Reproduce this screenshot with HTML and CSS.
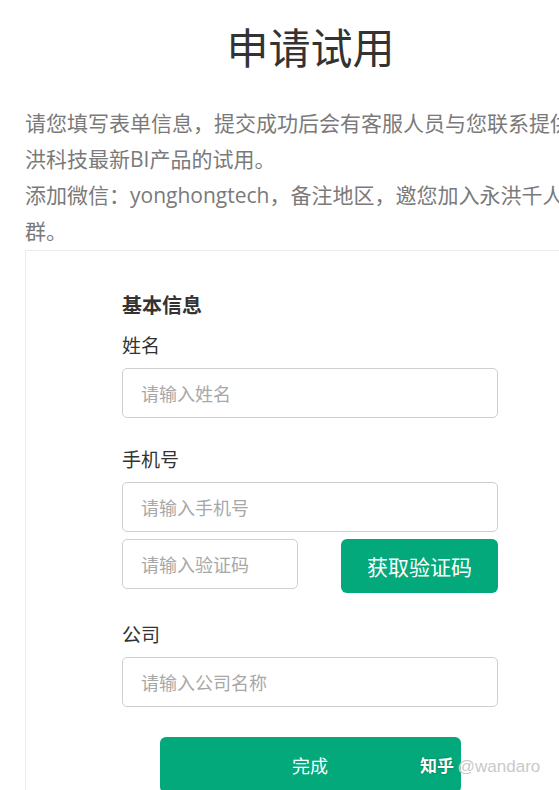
FILE: index.html
```html
<!DOCTYPE html>
<html lang="zh-CN">
<head>
<meta charset="utf-8">
<title>申请试用</title>
<link rel="stylesheet" href="styles.css">
</head>
<body>
<div class="page">
  <h1 class="title">申请试用</h1>
  <div class="intro">
    <p>请您填写表单信息，提交成功后会有客服人员与您联系提供永洪科技最新BI产品的试用。</p>
    <p>添加微信：yonghongtech，备注地区，邀您加入永洪千人社群。</p>
  </div>
  <div class="card">
    <form class="form">
      <div class="section-title">基本信息</div>
      <div class="field">
        <label class="label">姓名</label>
        <input class="input" type="text" placeholder="请输入姓名">
      </div>
      <div class="field">
        <label class="label">手机号</label>
        <input class="input" type="text" placeholder="请输入手机号">
        <div class="code-row">
          <input class="input code-input" type="text" placeholder="请输入验证码">
          <button type="button" class="code-btn">获取验证码</button>
        </div>
      </div>
      <div class="field last">
        <label class="label">公司</label>
        <input class="input" type="text" placeholder="请输入公司名称">
      </div>
      <button type="button" class="submit">完成</button>
    </form>
  </div>
</div>
<div class="watermark"><span class="wm-zh">知乎</span> <span class="wm-user">@wandaro</span></div>
</body>
</html>
```
FILE: styles.css
```css
html, body {
  margin: 0;
  padding: 0;
  overflow: hidden;
  background: #ffffff;
}
body {
  font-family: "Open Sans", "Noto Sans CJK SC", sans-serif;
  color: #333333;
}
.page {
  width: 573px;
  padding-left: 25px;
}
.title {
  width: 571px;
  margin: 0;
  padding-top: 18px;
  font-size: 42px;
  line-height: 56px;
  font-weight: normal;
  text-align: center;
  color: #333333;
  font-family: "Noto Sans CJK SC", sans-serif;
}
.intro {
  margin-top: 31px;
  font-size: 21px;
  line-height: 36px;
  color: #7a7a7a;
}
.intro p {
  margin: 0;
}
.card {
  width: 570px;
  box-sizing: border-box;
  margin-top: 1px;
  border: 1px solid #ececec;
  padding: 39px 0 40px;
  display: flex;
  justify-content: center;
}
.form {
  width: 376px;
  display: flex;
  flex-direction: column;
  font-family: "Noto Sans CJK SC", sans-serif;
}
.section-title {
  font-size: 20px;
  line-height: 30px;
  font-weight: bold;
  color: #333333;
  margin-bottom: 10px;
}
.field {
  display: flex;
  flex-direction: column;
  margin-bottom: 26px;
}
.field.last {
  margin-bottom: 0;
}
.label {
  font-size: 19px;
  line-height: 30px;
  color: #333333;
  margin-bottom: 8px;
}
.input {
  box-sizing: border-box;
  width: 100%;
  height: 50px;
  border: 1px solid #cfcfcf;
  border-radius: 5px;
  padding: 0 18px;
  font-size: 18px;
  font-family: "Noto Sans CJK SC", sans-serif;
  color: #333333;
  background: #ffffff;
  outline: none;
}
.input::placeholder {
  color: #a8a8a8;
}
.code-row {
  display: flex;
  justify-content: space-between;
  align-items: flex-start;
  margin-top: 7px;
}
.code-input {
  width: 176px;
}
.code-btn {
  width: 157px;
  height: 54px;
  border: none;
  border-radius: 6px;
  background: #03a97b;
  color: #ffffff;
  font-size: 21px;
  font-family: "Noto Sans CJK SC", sans-serif;
  padding: 0;
}
.submit {
  align-self: center;
  width: 301px;
  height: 56px;
  margin-top: 30px;
  border: none;
  border-radius: 6px;
  background: #03a97b;
  color: #ffffff;
  font-size: 18px;
  font-family: "Noto Sans CJK SC", sans-serif;
  padding: 0;
}
.watermark {
  position: absolute;
  left: 420px;
  top: 753px;
  font-size: 17px;
  line-height: 24px;
  white-space: nowrap;
  font-family: "Noto Sans CJK SC", sans-serif;
}
.wm-zh {
  color: #ffffff;
  font-weight: bold;
  text-shadow: 0 0 2px rgba(0, 0, 0, 0.45);
}
.wm-user {
  color: #c9c9c9;
  font-family: "Liberation Sans", sans-serif;
  text-shadow: 0 0 1px #ffffff;
}
```
